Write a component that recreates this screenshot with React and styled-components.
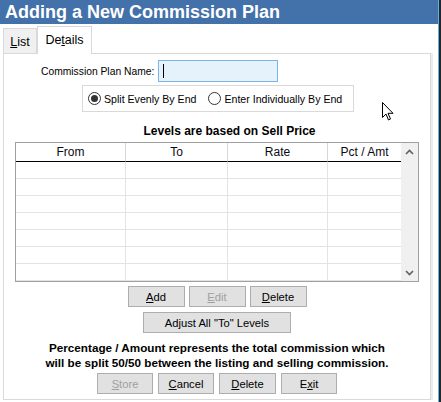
import React from 'react';
import styled, { createGlobalStyle } from 'styled-components';

const GlobalStyle = createGlobalStyle`
  html, body {
    margin: 0;
    padding: 0;
    background: #ffffff;
  }
  body {
    font-family: "Liberation Sans", Arial, sans-serif;
    font-size: 12px;
    color: #000;
  }
`;

const Window = styled.div`
  width: 441px;
  height: 402px;
  box-sizing: border-box;
  border-right: 2px solid #262626;
  overflow: hidden;
`;

const Frame = styled.div`
  height: 100%;
  box-sizing: border-box;
  border-right: 1px solid #5ab4ec;
  display: flex;
  flex-direction: column;
  position: relative;
`;

const TitleBar = styled.div`
  height: 24px;
  flex-shrink: 0;
  background: #4371aa;
  color: #fff;
  font-weight: bold;
  font-size: 18px;
  line-height: 25px;
  padding-left: 5px;
  white-space: nowrap;
`;

const Body = styled.div`
  padding: 0 7px 0 3px;
  display: flex;
  flex-direction: column;
`;

const TabRow = styled.div`
  height: 29px;
  display: flex;
  align-items: flex-end;
`;

const Tab = styled.div`
  box-sizing: border-box;
  width: ${({ $w }) => $w}px;
  height: ${({ $active }) => ($active ? 28 : 25)}px;
  background: ${({ $active }) => ($active ? '#ffffff' : '#f0f0f0')};
  border: 1px solid #d9d9d9;
  border-bottom: none;
  margin-bottom: ${({ $active }) => ($active ? -1 : 0)}px;
  position: relative;
  z-index: ${({ $active }) => ($active ? 1 : 0)};
  font-size: 12.5px;
  display: flex;
  justify-content: center;
  align-items: ${({ $active }) => ($active ? 'flex-start' : 'center')};
  padding-top: ${({ $active }) => ($active ? 6 : 2)}px;
`;

const Panel = styled.div`
  box-sizing: border-box;
  height: 347px;
  border: 1px solid #d9d9d9;
  box-shadow: 2px 0 0 #ececec;
  display: flex;
  flex-direction: column;
`;

const NameRow = styled.div`
  display: flex;
  align-items: center;
  gap: 4px;
  margin-top: 6px;
  padding-left: 37px;
`;

const Label = styled.span`
  white-space: nowrap;
  font-size: 10.3px;
`;

const NameInput = styled.div`
  box-sizing: border-box;
  width: 120px;
  height: 22px;
  background: #e5f1fb;
  border: 1px solid #7ab4e8;
  display: flex;
  align-items: center;
  padding-left: 4px;
`;

const Caret = styled.span`
  width: 1px;
  height: 14px;
  background: #000;
`;

const RadioBox = styled.div`
  box-sizing: border-box;
  margin: 3px 0 0 78px;
  width: 272px;
  height: 27px;
  border: 1px solid #d9d9d9;
  display: flex;
  align-items: center;
  padding-left: 5px;
`;

const RadioOption = styled.label`
  display: flex;
  align-items: center;
  gap: 3px;
  margin-right: ${({ $gap }) => $gap || 0}px;
  white-space: nowrap;
  font-size: 10.6px;
`;

const RadioCircle = styled.span`
  box-sizing: border-box;
  width: 13px;
  height: 13px;
  border-radius: 50%;
  border: 1px solid #333;
  background: #fff;
  display: flex;
  align-items: center;
  justify-content: center;

  &::after {
    content: '';
    width: 7px;
    height: 7px;
    border-radius: 50%;
    background: ${({ $on }) => ($on ? '#333' : 'transparent')};
  }
`;

const Heading = styled.div`
  margin-top: 12px;
  padding-left: 25px;
  text-align: center;
  font-weight: bold;
  line-height: 15px;
`;

const Table = styled.div`
  box-sizing: border-box;
  margin: 3px 0 0 11px;
  width: 404px;
  height: 140px;
  border: 1px solid #a0a0a0;
  display: flex;
`;

const Grid = styled.div`
  flex: 1;
  display: grid;
  grid-template-columns: 109px 102px 100px 74px;
  grid-auto-rows: 17px;
  grid-template-rows: 19px;
  align-content: start;
`;

const HeadCell = styled.div`
  box-sizing: border-box;
  border-bottom: 1px solid #000;
  border-left: ${({ $first }) => ($first ? 'none' : '1px solid #d6d6d6')};
  text-align: center;
  line-height: 18px;
  font-size: 12px;
  color: #0a0a14;
`;

const Cell = styled.div`
  box-sizing: border-box;
  border-bottom: 1px solid #e3e3e3;
  border-left: ${({ $first }) => ($first ? 'none' : '1px solid #e3e3e3')};
`;

const ScrollBar = styled.div`
  width: 17px;
  background: #f0f0f0;
  display: flex;
  flex-direction: column;
  justify-content: space-between;
  align-items: center;
  padding: 6px 0 5px;
  box-sizing: border-box;
`;

const ButtonRow = styled.div`
  display: flex;
  justify-content: center;
  gap: ${({ $gap }) => $gap}px;
  margin-top: ${({ $top }) => $top}px;
`;

const Button = styled.div`
  box-sizing: border-box;
  width: ${({ $w }) => $w}px;
  height: 21px;
  background: #e1e1e1;
  border: 1px solid #adadad;
  color: ${({ $disabled }) => ($disabled ? '#a0a0a0' : '#000')};
  display: flex;
  align-items: center;
  justify-content: center;
  font-size: 11.2px;
  white-space: nowrap;
`;

const Note = styled.div`
  margin-top: 7px;
  text-align: center;
  font-weight: bold;
  font-size: 11.7px;
  line-height: 15px;
  white-space: nowrap;
`;

const Cursor = styled.svg`
  position: absolute;
  left: 382px;
  top: 102px;
`;

const Chevron = ({ down }) => (
  <svg width="9" height="6" viewBox="0 0 9 6">
    <path
      d={down ? 'M1 1 L4.5 4.5 L8 1' : 'M1 5 L4.5 1.5 L8 5'}
      fill="none"
      stroke="#606060"
      strokeWidth="1.6"
    />
  </svg>
);

const columns = ['From', 'To', 'Rate', 'Pct / Amt'];
const rows = Array.from({ length: 7 });

export default function App() {
  return (
    <>
      <GlobalStyle />
      <Window>
        <Frame>
          <TitleBar>Adding a New Commission Plan</TitleBar>
          <Body>
            <TabRow>
              <Tab $w={34}>
                <span><u>L</u>ist</span>
              </Tab>
              <Tab $w={55} $active>
                <span>De<u>t</u>ails</span>
              </Tab>
            </TabRow>
            <Panel>
              <NameRow>
                <Label>Commission Plan Name:</Label>
                <NameInput>
                  <Caret />
                </NameInput>
              </NameRow>
              <RadioBox>
                <RadioOption $gap={12}>
                  <RadioCircle $on />
                  Split Evenly By End
                </RadioOption>
                <RadioOption>
                  <RadioCircle />
                  Enter Individually By End
                </RadioOption>
              </RadioBox>
              <Heading>Levels are based on Sell Price</Heading>
              <Table>
                <Grid>
                  {columns.map((c, i) => (
                    <HeadCell key={c} $first={i === 0}>{c}</HeadCell>
                  ))}
                  {rows.map((_, r) =>
                    columns.map((c, i) => <Cell key={`${r}-${c}`} $first={i === 0} />)
                  )}
                </Grid>
                <ScrollBar>
                  <Chevron />
                  <Chevron down />
                </ScrollBar>
              </Table>
              <ButtonRow $gap={4} $top={4}>
                <Button $w={57}><span><u>A</u>dd</span></Button>
                <Button $w={57} $disabled><span><u>E</u>dit</span></Button>
                <Button $w={57}><span><u>D</u>elete</span></Button>
              </ButtonRow>
              <ButtonRow $gap={0} $top={5}>
                <Button $w={148}>Adjust All "To" Levels</Button>
              </ButtonRow>
              <Note>
                Percentage / Amount represents the total commission which
                <br />
                will be split 50/50 between the listing and selling commission.
              </Note>
              <ButtonRow $gap={5} $top={3}>
                <Button $w={56} $disabled><span><u>S</u>tore</span></Button>
                <Button $w={56}><span><u>C</u>ancel</span></Button>
                <Button $w={57}><span><u>D</u>elete</span></Button>
                <Button $w={56}><span>E<u>x</u>it</span></Button>
              </ButtonRow>
            </Panel>
          </Body>
          <Cursor width="12" height="19" viewBox="0 0 12 19">
            <path
              d="M0.5 0.5 L0.5 15.5 L4 12 L6.5 18 L8.5 17 L6 11.3 L11 11.3 Z"
              fill="#fff"
              stroke="#000"
              strokeWidth="1"
              strokeLinejoin="round"
            />
          </Cursor>
        </Frame>
      </Window>
    </>
  );
}
